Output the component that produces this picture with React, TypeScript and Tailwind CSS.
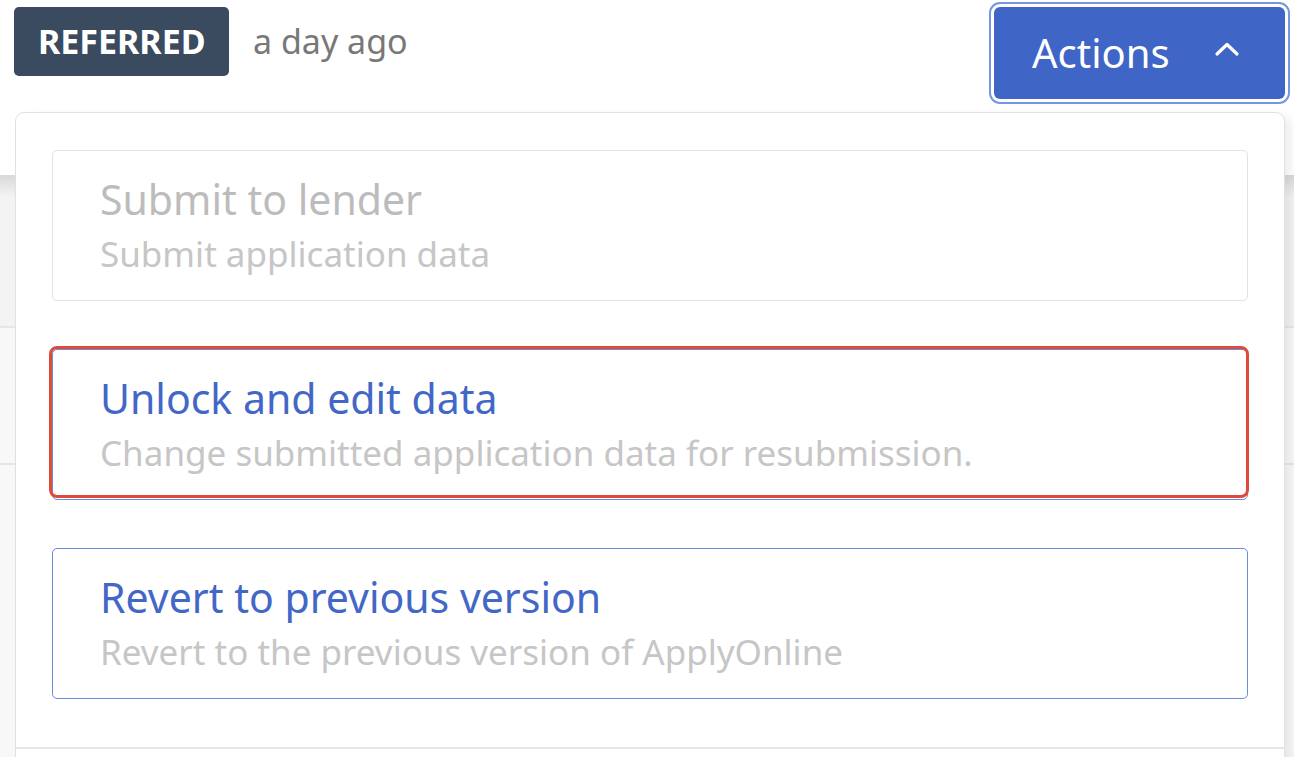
import { ReactNode } from "react";

type ActionItem = {
  title: string;
  description: string;
  disabled?: boolean;
  highlighted?: boolean;
};

const actions: ActionItem[] = [
  {
    title: "Submit to lender",
    description: "Submit application data",
    disabled: true,
  },
  {
    title: "Unlock and edit data",
    description: "Change submitted application data for resubmission.",
    highlighted: true,
  },
  {
    title: "Revert to previous version",
    description: "Revert to the previous version of ApplyOnline",
  },
];

function ChevronUp() {
  return (
    <svg width="26" height="16" viewBox="0 0 26 16" fill="none">
      <path
        d="M3 13 L13 3.5 L23 13"
        stroke="white"
        strokeWidth="3.2"
        strokeLinecap="round"
        strokeLinejoin="round"
      />
    </svg>
  );
}

function ActionCard({ item }: { item: ActionItem }) {
  const box = item.disabled
    ? "border-[#e2e2e2]"
    : "border-[#6b8bdb] cursor-pointer";
  const title = item.disabled ? "text-[#bcbcbc]" : "text-[#4267c6]";

  return (
    <div className="relative">
      <div
        className={`flex h-[151px] flex-col rounded-[5px] border-[1.5px] bg-white pl-[47px] pt-[20px] ${box}`}
      >
        <div className={`text-[41px] leading-[56px] ${title}`}>{item.title}</div>
        <div className="mt-[-1px] text-[35px] leading-[56px] text-[#c6c6c6]">
          {item.description}
        </div>
      </div>
      {item.highlighted && (
        <div className="pointer-events-none absolute -left-[3px] -top-[3px] -right-[1px] bottom-[2px] rounded-[8px] border-[3px] border-[#e04a3a]" />
      )}
    </div>
  );
}

function Panel({ children }: { children: ReactNode }) {
  return (
    <div className="absolute left-[15px] top-[112px] w-[1270px] rounded-t-[9px] border border-[#e1e1e1] bg-white shadow-[6px_4px_10px_rgba(0,0,0,0.07)]">
      <div className="flex flex-col gap-[48px] px-[36px] pb-[48px] pt-[37px]">
        {children}
      </div>
      <div className="h-[40px] border-t-2 border-[#e6e6e6]" />
    </div>
  );
}

export default function App() {
  return (
    <div className="relative h-[757px] w-[1294px] overflow-hidden bg-[#f8f8f8] font-['Noto_Sans','Open_Sans',sans-serif]">
      <div className="flex h-[175px] items-start justify-between bg-white pl-[14px] pr-[9px] pt-[7px]">
        <div className="flex items-center">
          <span className="flex h-[69px] w-[215px] items-center rounded-[5px] bg-[#3a4a5f] pl-[24px] text-[34px] font-bold text-white">
            REFERRED
          </span>
          <span className="ml-[24px] text-[34px] text-[#787878]">a day ago</span>
        </div>
        <button className="flex h-[92px] w-[291px] items-center rounded-[6px] bg-[#3f65c6] pl-[38px] text-[40px] text-white outline-2 outline-offset-[3px] outline-[#7596e2]">
          <span>Actions</span>
          <span className="ml-[44px] mt-[-8px]">
            <ChevronUp />
          </span>
        </button>
      </div>

      {/* page content behind the menu */}
      <div className="h-[22px] bg-gradient-to-b from-[#d9d9d9] to-[#f3f3f3]" />
      <div className="h-[131px] border-b-2 border-[#e6e6e6] bg-[#f3f3f3]" />
      <div className="h-[137px] border-b-2 border-[#e6e6e6] bg-[#f8f8f8]" />

      <Panel>
        {actions.map((item) => (
          <ActionCard key={item.title} item={item} />
        ))}
      </Panel>
    </div>
  );
}
